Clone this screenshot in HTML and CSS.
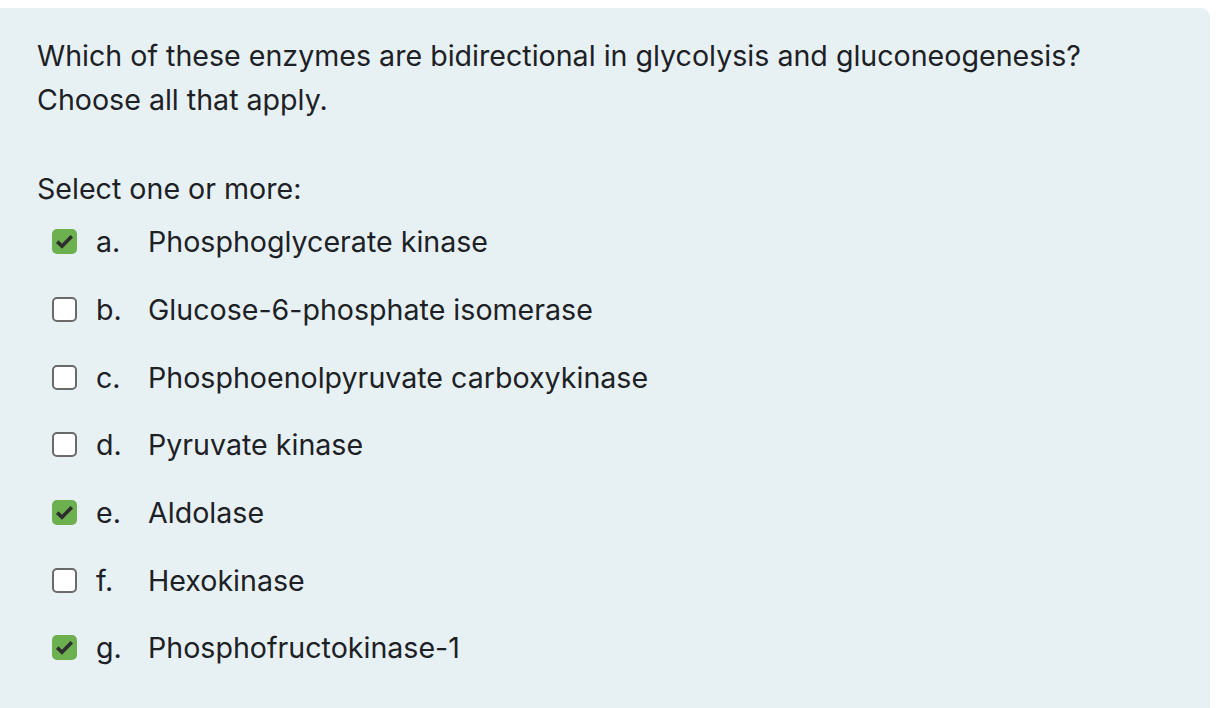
FILE: index.html
```html
<!DOCTYPE html>
<html lang="en">
<head>
<meta charset="utf-8">
<title>Question</title>
<link rel="stylesheet" href="styles.css">
</head>
<body>
<div class="que">
  <div class="qtext">
    <p>Which of these enzymes are bidirectional in glycolysis and gluconeogenesis? Choose all that apply.</p>
  </div>
  <div class="ablock">
    <div class="prompt">Select one or more:</div>
    <div class="answer">
      <div class="opt"><span class="cb checked"><svg viewBox="0 0 25 25"><path d="M5.2 12.6 L10 17.2 L19.8 7.2" /></svg></span><span class="num">a.</span><span class="lbl">Phosphoglycerate kinase</span></div>
      <div class="opt"><span class="cb"></span><span class="num">b.</span><span class="lbl">Glucose-6-phosphate isomerase</span></div>
      <div class="opt"><span class="cb"></span><span class="num">c.</span><span class="lbl">Phosphoenolpyruvate carboxykinase</span></div>
      <div class="opt"><span class="cb"></span><span class="num">d.</span><span class="lbl">Pyruvate kinase</span></div>
      <div class="opt"><span class="cb checked"><svg viewBox="0 0 25 25"><path d="M5.2 12.6 L10 17.2 L19.8 7.2" /></svg></span><span class="num">e.</span><span class="lbl">Aldolase</span></div>
      <div class="opt"><span class="cb"></span><span class="num">f.</span><span class="lbl">Hexokinase</span></div>
      <div class="opt"><span class="cb checked"><svg viewBox="0 0 25 25"><path d="M5.2 12.6 L10 17.2 L19.8 7.2" /></svg></span><span class="num">g.</span><span class="lbl">Phosphofructokinase-1</span></div>
    </div>
  </div>
</div>
</body>
</html>
```
FILE: styles.css
```css
html, body {
  margin: 0;
  padding: 0;
  background: #ffffff;
  height: 100%;
  overflow: hidden;
}
body {
  font-family: Inter, "Liberation Sans", sans-serif;
  color: #1d2125;
  font-size: 28.6px;
}
.que {
  margin: 8px 6px 0 0;
  background: #e7f1f4;
  border-radius: 0 9px 0 0;
  padding: 26px 37px 40px 37px;
  min-height: 760px;
}
.qtext p {
  margin: 0;
  line-height: 44px;
}
.ablock {
  margin-top: 45px;
}
.prompt {
  line-height: 44px;
  margin-bottom: -3px;
}
.opt {
  display: flex;
  align-items: center;
  height: 67.67px;
  margin-left: 15px;
}
.cb {
  box-sizing: border-box;
  width: 25px;
  height: 25px;
  border: 2px solid #6a6a6a;
  border-radius: 5px;
  background: #ffffff;
  flex: none;
  margin-right: 19px;
  display: flex;
  align-items: center;
  justify-content: center;
}
.cb.checked {
  background: #6db04f;
  border: none;
}
.cb svg {
  width: 25px;
  height: 25px;
  display: block;
}
.cb svg path {
  fill: none;
  stroke: #2e2e2e;
  stroke-width: 3.6;
  stroke-linecap: butt;
  stroke-linejoin: miter;
}
.num {
  width: 52px;
  flex: none;
}
.lbl {
  white-space: nowrap;
}
```
